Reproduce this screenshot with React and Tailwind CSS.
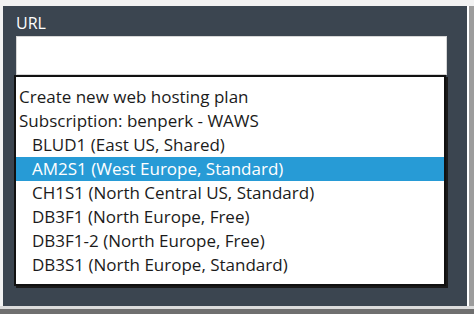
const items = [
  { label: "BLUD1 (East US, Shared)" },
  { label: "AM2S1 (West Europe, Standard)", selected: true },
  { label: "CH1S1 (North Central US, Standard)" },
  { label: "DB3F1 (North Europe, Free)" },
  { label: "DB3F1-2 (North Europe, Free)" },
  { label: "DB3S1 (North Europe, Standard)" },
];

export default function App() {
  return (
    <div className="w-[474px] h-[314px] bg-[#f2f2f2] flex flex-col overflow-hidden font-['Open_Sans',sans-serif]">
      <div className="flex h-[306px] pt-[6px] pl-[3px]">
        {/* dark settings panel */}
        <div className="w-[464px] bg-[#3b4550] flex flex-col pl-[11px]">
          <div className="text-white text-[16px] leading-[20px] pt-[7px] pl-[2px] h-[30px]">URL</div>
          <div className="ml-[2px] w-[431px] h-[39px] bg-white border border-[#d6d6d6]" />
          <div className="w-[432px] h-[211px] bg-white border-2 border-[#111] shadow-[2px_2px_0_#1a1a1a] pt-[8px] text-[17px] leading-[24px] text-[#1b1b1b]">
            <div className="pl-[3px]">Create new web hosting plan</div>
            <div className="pl-[3px]">Subscription: benperk - WAWS</div>
            {items.map((it, i) => (
              <div
                key={i}
                className={
                  it.selected
                    ? "pl-[16px] bg-[#279bd6] text-white"
                    : "pl-[16px]"
                }
              >
                {it.label}
              </div>
            ))}
          </div>
        </div>
        <div className="w-[2px] bg-white" />
        <div className="flex-1 bg-[#9c9c9c]" />
      </div>
      <div className="h-[3px] bg-[#dcdcdc]" />
      <div className="flex-1 bg-[#6f6f6f]" />
    </div>
  );
}
